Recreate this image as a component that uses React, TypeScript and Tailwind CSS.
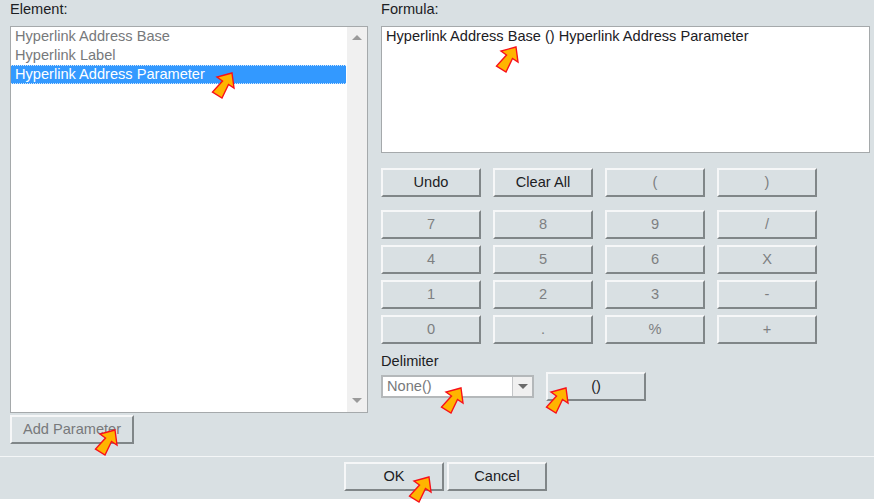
const font = { fontFamily: '"Liberation Sans", Arial, sans-serif' };

function Btn({ label, dim, className = "" }: { label: string; dim?: boolean; className?: string }) {
  return (
    <div
      className={`h-[29px] w-[100px] shrink-0 flex items-center justify-center border-2 border-t-[#f6f7f8] border-l-[#f6f7f8] border-r-[#808688] border-b-[#808688] text-[14.6px] leading-none ${dim ? "text-[#7d7f81]" : "text-[#1c2024]"} ${className}`}
    >
      {label}
    </div>
  );
}

function Arrow({ x, y }: { x: number; y: number }) {
  return (
    <svg className="absolute" style={{ left: x, top: y }} width="25" height="28" viewBox="0 0 25 28">
      <polygon points="21,1 23,16 17.5,12.5 11,26 1.5,20 11.5,9 6,5" fill="#ffb400" stroke="#f8101a" strokeWidth="1.4" />
    </svg>
  );
}

const rows = [
  ["7", "8", "9", "/"],
  ["4", "5", "6", "X"],
  ["1", "2", "3", "-"],
  ["0", ".", "%", "+"],
];

export default function App() {
  return (
    <div className="relative w-[874px] h-[504px] bg-white overflow-hidden" style={font}>
      <div className="h-[499px] bg-[#d9e0e3] flex flex-col">
        <div className="flex h-[456px] pl-[10px] gap-[13px]">
          <div className="w-[358px] flex flex-col">
            <div className="h-[26px] pt-[1px] text-[14.6px] leading-[17px] text-[#1c2024]">Element:</div>
            <div className="h-[387px] bg-white border border-[#a5a9ab] flex">
              <div className="flex-1 min-w-0 text-[14.6px] leading-[19px] text-[#77797b]">
                <div className="pl-[4px] h-[19px]">Hyperlink Address Base</div>
                <div className="pl-[4px] h-[19px]">Hyperlink Label</div>
                <div className="pl-[4px] h-[19px] bg-[#3399ff] text-white border-y border-dotted border-[#cfe6ff] leading-[17px]">
                  Hyperlink Address Parameter
                </div>
              </div>
              <div className="w-[20px] bg-[#f0f0f0] flex flex-col items-center justify-between pt-[8px] pb-[9px] ml-[1px]">
                <div className="w-0 h-0 border-x-[5px] border-x-transparent border-b-[5px] border-b-[#9a9a9a]" />
                <div className="w-0 h-0 border-x-[5px] border-x-transparent border-t-[5px] border-t-[#9a9a9a]" />
              </div>
            </div>
            <div className="mt-[2px] h-[29px] w-[124px] flex items-center justify-center border-2 border-t-[#f6f7f8] border-l-[#f6f7f8] border-r-[#808688] border-b-[#808688] text-[14.6px] text-[#77797b]">
              Add Parameter
            </div>
          </div>
          <div className="w-[489px] flex flex-col">
            <div className="h-[26px] pt-[1px] text-[14.6px] leading-[17px] text-[#1c2024]">Formula:</div>
            <div className="h-[127px] bg-white border border-[#a5a9ab] px-[4px] pt-[1px] text-[14.6px] leading-[17px] text-[#1c2024]">
              Hyperlink Address Base () Hyperlink Address Parameter
            </div>
            <div className="mt-[15px] flex gap-[12px]">
              <Btn label="Undo" />
              <Btn label="Clear All" />
              <Btn label="(" dim />
              <Btn label=")" dim />
            </div>
            <div className="mt-[13px] flex flex-col gap-[6px]">
              {rows.map((r) => (
                <div key={r[0]} className="flex gap-[12px]">
                  {r.map((l) => (
                    <Btn key={l} label={l} dim />
                  ))}
                </div>
              ))}
            </div>
            <div className="mt-[9px] flex items-start gap-[12px]">
              <div className="flex flex-col">
                <div className="h-[17px] text-[14.6px] leading-[17px] text-[#1c2024]">Delimiter</div>
                <div className="mt-[5px] w-[153px] h-[23px] bg-white border-2 border-[#b4b8ba] flex">
                  <div className="flex-1 pl-[4px] text-[14.6px] leading-[19px] text-[#77797b]">None()</div>
                  <div className="w-[20px] bg-[#f0f0f0] border-l border-[#c4c6c8] flex items-center justify-center">
                    <div className="w-0 h-0 border-x-[5px] border-x-transparent border-t-[5px] border-t-[#6a6a6a]" />
                  </div>
                </div>
              </div>
              <Btn label="()" className="mt-[19px]" />
            </div>
          </div>
        </div>
        <div className="h-px bg-[#f4f6f7]" />
        <div className="flex pl-[344px] gap-[3px] pt-[5px]">
          <Btn label="OK" />
          <Btn label="Cancel" />
        </div>
      </div>
      <Arrow x={211} y={72} />
      <Arrow x={495} y={46} />
      <Arrow x={440} y={387} />
      <Arrow x={545} y={387} />
      <Arrow x={94} y={429} />
      <Arrow x={408} y={476} />
    </div>
  );
}
